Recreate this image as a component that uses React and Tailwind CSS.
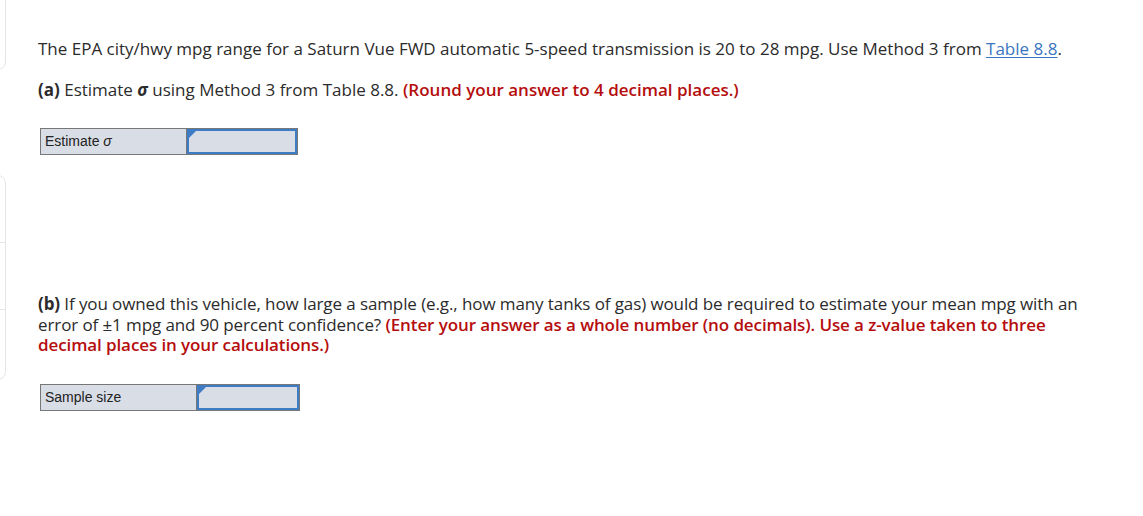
export default function App() {
  const font = { fontFamily: '"Open Sans", "Lato", sans-serif' }
  return (
    <div className="relative w-[1143px] h-[516px] bg-white overflow-hidden text-[#2b2b2b]" style={font}>
      {/* clipped side panels at the left edge */}
      <div className="absolute left-[-20px] top-[-10px] w-[26px] h-[80px] border border-[#e6e6e6] rounded-lg" />
      <div className="absolute left-[-20px] top-[175px] w-[26px] h-[205px] border border-[#e6e6e6] rounded-lg flex flex-col">
        <div className="h-[67px] border-b border-[#e6e6e6]" />
        <div className="h-[67px] border-b border-[#e6e6e6]" />
      </div>

      <div className="pl-[38px] pt-[38px]">
        <p className="text-[17px] leading-[22px] whitespace-nowrap">
          The EPA city/hwy mpg range for a Saturn Vue FWD automatic 5-speed transmission is 20 to 28 mpg. Use Method 3 from{' '}
          <span className="text-[#3a75c0] underline underline-offset-2">Table 8.8</span>.
        </p>
        <p className="mt-[19px] text-[17px] leading-[22px] whitespace-nowrap">
          <b>(a)</b> Estimate <i className="font-bold">σ</i> using Method 3 from Table 8.8.{' '}
          <b className="text-[#b50d0d] font-semibold">(Round your answer to 4 decimal places.)</b>
        </p>

        <div className="mt-[27px] ml-[2px] flex h-[27px] w-[258px] border border-[#777] bg-[#d9dde6]" style={{ fontFamily: '"Liberation Sans", Arial, sans-serif' }}>
          <div className="w-[146px] border-r border-[#777] px-[4px] text-[14px] leading-[25px] text-[#222]">
            Estimate <i>σ</i>
          </div>
          <div className="relative flex-1 border-2 border-[#3f7cc6] bg-[#d9dde6]">
            <div className="absolute left-0 top-0 w-0 h-0 border-t-[7px] border-r-[7px] border-t-[#3f7cc6] border-r-transparent" />
          </div>
        </div>

        <p className="mt-[139px] text-[17px] leading-[20.5px] whitespace-nowrap tracking-[-0.1px]">
          <b>(b)</b> If you owned this vehicle, how large a sample (e.g., how many tanks of gas) would be required to estimate your mean mpg with an
          <br />
          error of ±1 mpg and 90 percent confidence?{' '}
          <b className="text-[#b50d0d] font-semibold">
            (Enter your answer as a whole number (no decimals). Use a z-value taken to three
            <br />
            decimal places in your calculations.)
          </b>
        </p>

        <div className="mt-[28px] ml-[2px] flex h-[27px] w-[260px] border border-[#777] bg-[#d9dde6]" style={{ fontFamily: '"Liberation Sans", Arial, sans-serif' }}>
          <div className="w-[156px] border-r border-[#777] px-[4px] text-[14px] leading-[25px] text-[#222]">
            Sample size
          </div>
          <div className="relative flex-1 border-2 border-[#3f7cc6] bg-[#d9dde6]">
            <div className="absolute left-0 top-0 w-0 h-0 border-t-[7px] border-r-[7px] border-t-[#3f7cc6] border-r-transparent" />
          </div>
        </div>
      </div>
    </div>
  )
}
